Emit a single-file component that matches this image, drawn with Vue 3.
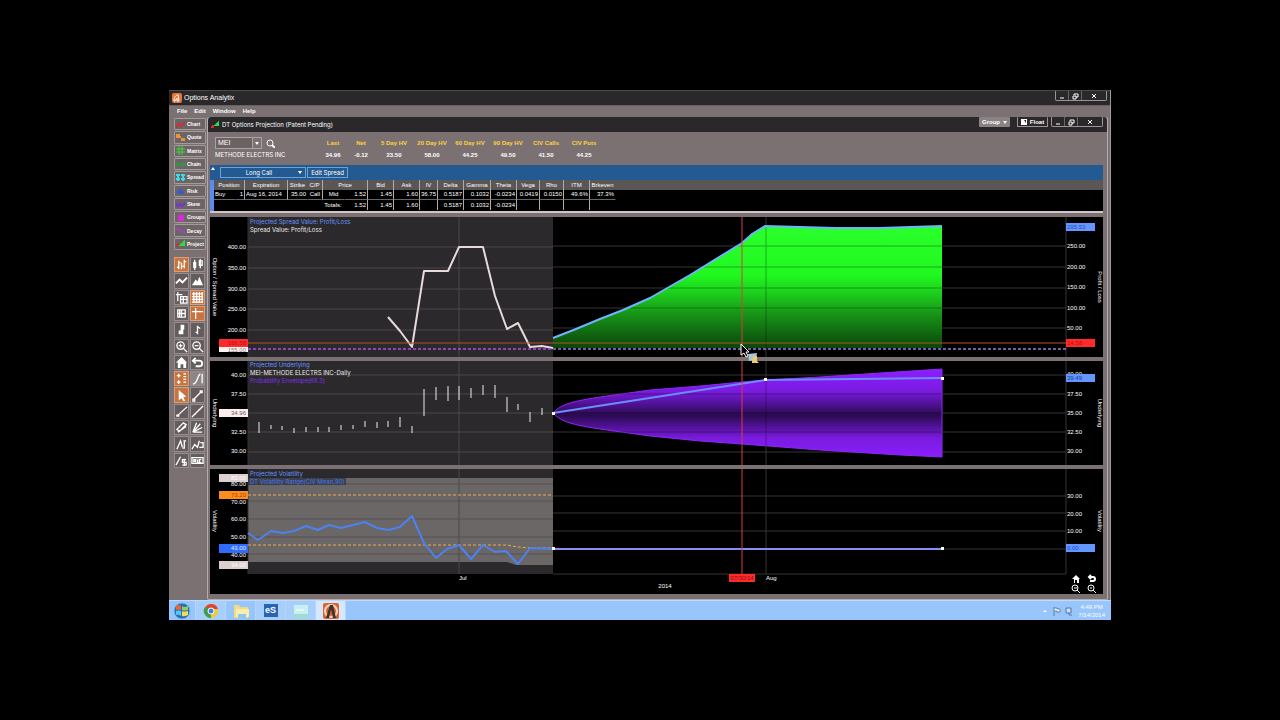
<script setup>
import { ref } from 'vue'

const symbol = ref('MEI')
const strategy = ref('Long Call')

const menus = ['File', 'Edit', 'Window', 'Help']

const launchers = [
  { name: 'Chart', color: '#c8323c', d: 'M1 7L4 4L6 6L10 2' },
  { name: 'Quote', color: '#e8963c', d: 'M2 2H4V4H2ZM4 4H6M7 6H9V7H7Z' },
  { name: 'Matrix', color: '#3cdc3c', thin: true, d: 'M1 3H10M1 6H10M4 0V9M7 0V9' },
  { name: 'Chain', color: '#28a03c', thin: true, d: 'M1 3H4V6H1ZM7 3H10V6H7ZM4 5H7' },
  { name: 'Spread', color: '#3cdce6', d: 'M1 2H5M6 2H10M1 6H5M6 6H10M3 1V8M8 1V8' },
  { name: 'Risk', color: '#325ad2', d: 'M2 6H9M4 4H7M3 7H8' },
  { name: 'Skew', color: '#7832d2', d: 'M1 4L3 7L5 5L7 7L10 4' },
  { name: 'Groups', color: '#dc28dc', d: 'M3 3H9M3 5H9M3 7H9' },
  { name: 'Decay', color: '#a046be', d: 'M1 3C5 3 6 5 10 7' },
  { name: 'Project', color: '#dc2832', d: 'M1 7L4 5', color2: '#32dc3c', d2: 'M6 6L9 3V6Z' },
]

const tools = [
  { name: 'Bar chart', on: true, d: 'M4 3V12M2 10H4M4 5H6M10 2V11M8 9H10M10 4H12M7 5V12' },
  { name: 'Candles', d: 'M4 2V13M3 5H5V10H3ZM10 1V11M9 3H12V8H9Z' },
  { name: 'Line chart', thick: true, d: 'M1 10L5 6L8 9L13 4' },
  { name: 'Area chart', fill: 'M1 12L5 6L7 8L9 3L13 12Z' },
  { name: 'Grid table', d: 'M1 4H8M3 1V11M6 6H13V13H6ZM6 9H13M9 6V13' },
  { name: 'Grid', on: true, d: 'M1 3H13M1 6H13M1 9H13M1 12H13M3 1V13M6 1V13M9 1V13M12 1V13' },
  { name: 'Data window', d: 'M3 3H11V11H3ZM3 7H11M7 3V11M5 3V11' },
  { name: 'Crosshair', on: true, d: 'M1 5H13M5 1V13' },
  { name: 'Widen bars', fill: 'M6 2H10V7H9V12H4V8H6Z' },
  { name: 'Narrow bars', d: 'M7 3V12M7 4L10 6M5 10H7' },
  { name: 'Zoom in', d: 'M10 6A4 4 0 1 1 2 6A4 4 0 1 1 10 6M9 9L13 13M4 6H8M6 4V8' },
  { name: 'Zoom out', d: 'M10 6A4 4 0 1 1 2 6A4 4 0 1 1 10 6M9 9L13 13M4 6H8' },
  { name: 'Home', fill: 'M7 1L13 7H12V13H9V9H6V13H3V7H1Z' },
  { name: 'Undo', d: 'M2 5H9A3 3 0 0 1 9 11H5M5 2L2 5L5 8', thick: true },
  { name: 'Levels', on: true, d: 'M2 4H6M4 2V6M2 11H6M4 9V13M9 2H12M9 5H12M9 8H12M9 11H12' },
  { name: 'Curve', pale: true, d: 'M2 13C8 12 6 4 10 2M12 2V12' },
  { name: 'Pointer', on: true, fill: 'M4 1L12 8L9 9L11 13L9 13L7 10L4 12Z' },
  { name: 'Segment', d: 'M3 11L11 3M2 11H4V13H2ZM10 2H12V4H10Z' },
  { name: 'Ray', d: 'M2 12L13 2M2 11H4V12H2Z' },
  { name: 'Line', d: 'M1 13L13 1M3 10H5M8 5H10' },
  { name: 'Channel', d: 'M2 9L9 2L12 4L5 11ZM3 12L12 6' },
  { name: 'Fan', d: 'M2 12L6 2M2 12L10 3M2 12L12 7M2 12H12' },
  { name: 'Wave', d: 'M2 12L6 3L8 10M9 3H12M10 3V11H8' },
  { name: 'Zigzag', d: 'M1 12L4 7L7 10L9 3M9 10H13V5H10' },
  { name: 'Price note', d: 'M1 12L6 3M12 6H8V9H12V12H8M10 5V13' },
  { name: 'Text', d: 'M1 4H13V10H1ZM3 9V6H5V9M3 8H5M7 6V9H8M11 6H9V9H11' },
]

const stats = [
  ['Last', '34.96'], ['Net', '-0.12'], ['5 Day HV', '23.50'], ['20 Day HV', '58.00'],
  ['60 Day HV', '44.25'], ['90 Day HV', '49.50'], ['CIV Calls', '41.50'], ['CIV Puts', '44.25'],
]

const legs = [
  ['1.52', '1.45', '1.60', '36.75', '0.5187', '0.1032', '-0.0234', '0.0419', '0.0150', '49.6%', '37.3%'],
  ['1.52', '1.45', '1.60', '', '0.5187', '0.1032', '-0.0234', '', '', '', ''],
]
const greeks = ['Bid', 'Ask', 'IV', 'Delta', 'Gamma', 'Theta', 'Vega', 'Rho', 'ITM', 'Brkeven']

const gridLeft = [247, 268, 289, 309, 330, 375, 394, 413, 432, 452]
const gridRight = [246, 267, 288, 308, 328, 375, 394, 413, 432, 452, 496, 513, 531, 549, 574]
const gridVol = [484, 501, 519, 537, 554]

const leftLabels = [
  ['400.00', 247], ['350.00', 268], ['300.00', 289], ['250.00', 309], ['200.00', 330],
  ['40.00', 375], ['37.50', 394], ['32.50', 432], ['30.00', 451],
  ['80.00', 484], ['70.00', 502], ['60.00', 519], ['50.00', 537], ['40.00', 555],
]
const rightLabels = [
  ['250.00', 246], ['200.00', 267], ['150.00', 287], ['100.00', 308], ['50.00', 328],
  ['40.00', 374], ['37.50', 394], ['35.00', 413], ['32.50', 432], ['30.00', 451],
  ['30.00', 496], ['20.00', 514], ['10.00', 531],
]
const leftTags = [
  { y: 347, h: 5, bg: '#fff4f4', fg: '#8a7a7a', t: '155.00' },
  { y: 339, h: 8, bg: '#ff2a2a', fg: '#a81414', t: '166.58' },
  { y: 409, h: 8, bg: '#fdeeee', fg: '#6a5a5a', t: '34.96' },
  { y: 474, h: 8, bg: '#dccfcf', fg: '#ffffff', t: '83.00' },
  { y: 491, h: 8, bg: '#ff8c1e', fg: '#9a4a00', t: '73.20' },
  { y: 544, h: 9, bg: '#2f6bff', fg: '#e6eeff', t: '43.00' },
  { y: 561, h: 8, bg: '#dccfcf', fg: '#ffffff', t: '34.00' },
]
const rightTags = [
  { y: 223, bg: '#6496ff', fg: '#2850b4', t: '295.53' },
  { y: 339, bg: '#ff2a2a', fg: '#a81414', t: '14.58' },
  { y: 374, bg: '#6496ff', fg: '#143c96', t: '39.49' },
  { y: 544, bg: '#6496ff', fg: '#1e46dc', t: '0.00' },
]
const axisTitles = [
  ['Option / Spread Value', 214, 287], ['Underlying', 214, 413], ['Volatility', 214, 521],
  ['Profit / Loss', 1099, 287], ['Underlying', 1099, 413], ['Volatility', 1099, 521],
]
const bars = [
  [259, 422, 433], [271, 425, 429], [282, 426, 430], [294, 428, 433], [306, 427, 432],
  [318, 427, 432], [329, 427, 432], [341, 425, 430], [353, 425, 429], [365, 421, 427],
  [377, 422, 428], [388, 421, 427], [400, 417, 427], [412, 426, 433], [424, 389, 416],
  [436, 387, 400], [448, 386, 401], [459, 386, 400], [471, 388, 398], [483, 385, 395],
  [495, 385, 398], [507, 397, 412], [518, 404, 410], [530, 412, 422], [542, 408, 415],
]
</script>

<template>
  <main class="desktop">
    <section class="app">
      <header class="titlebar">
        <svg class="logo" viewBox="0 0 10 10">
          <rect width="10" height="10" rx="2" fill="#e8743c" />
          <path d="M2 8C2 4 4 2 6 2L7 8H5V5L3 8Z" fill="none" stroke="#fff" />
        </svg>
        <h1>Options Analytix</h1>
        <div class="winctl outer">
          <button aria-label="Minimize"><svg viewBox="0 0 8 8"><path d="M2 6H6" /></svg></button>
          <button aria-label="Restore"><svg viewBox="0 0 8 8"><path d="M3 3V2H7V5H5M2 4H5V7H2Z" /></svg></button>
          <button aria-label="Close" class="wide"><svg viewBox="0 0 8 8"><path d="M2 2L6 6M6 2L2 6" /></svg></button>
        </div>
      </header>
      <nav class="menu"><button v-for="m in menus" :key="m">{{ m }}</button></nav>

      <div class="work">
        <aside class="side">
          <div class="launch">
            <button v-for="l in launchers" :key="l.name">
              <svg viewBox="0 0 11 9" :class="{ thin: l.thin }">
                <path :d="l.d" :stroke="l.color" />
                <path v-if="l.d2" :d="l.d2" :stroke="l.color2" />
              </svg>
              <span>{{ l.name }}</span>
            </button>
          </div>
          <div class="tools">
            <button v-for="t in tools" :key="t.name" :aria-label="t.name" :class="{ on: t.on, pale: t.pale, thick: t.thick }">
              <svg viewBox="0 0 14 14">
                <path v-if="t.d" :d="t.d" />
                <path v-if="t.fill" class="solid" :d="t.fill" />
              </svg>
            </button>
          </div>
        </aside>

        <section class="doc">
          <header class="doctitle">
            <svg class="mark" viewBox="0 0 10 8"><path d="M1 6H3V4" stroke="#e02832" /><path d="M6 4L8 2V4Z" stroke="#32dc3c" /></svg>
            <h2>DT Options Projection (Patent Pending)</h2>
            <button class="group">Group <i></i></button>
            <button class="float">
              <svg viewBox="0 0 6 6"><path d="M0 0H6V6H0Z" fill="#fff" /><path d="M3 1H5V4Z" fill="#222" /></svg>
              Float
            </button>
            <div class="winctl">
              <button aria-label="Minimize"><svg viewBox="0 0 8 8"><path d="M2 6H6" /></svg></button>
              <button aria-label="Restore"><svg viewBox="0 0 8 8"><path d="M3 3V2H7V5H5M2 4H5V7H2Z" /></svg></button>
              <button aria-label="Close" class="wide"><svg viewBox="0 0 8 8"><path d="M2 2L6 6M6 2L2 6" /></svg></button>
            </div>
          </header>

          <div class="quote">
            <div class="sym">
              <div class="symrow">
                <input v-model="symbol" aria-label="Symbol" />
                <button class="drop" aria-label="Symbol list"><i></i></button>
                <button class="find" aria-label="Find symbol">
                  <svg viewBox="0 0 9 9"><circle cx="4" cy="4" r="3" /><path d="M6 6L9 9" stroke-width="2" /></svg>
                </button>
              </div>
              <p>METHODE ELECTRS INC</p>
            </div>
            <dl class="stats">
              <div v-for="s in stats" :key="s[0]"><dt>{{ s[0] }}</dt><dd>{{ s[1] }}</dd></div>
            </dl>
          </div>

          <div class="strategy">
            <i class="up"></i>
            <div class="pick">
              <select v-model="strategy" aria-label="Strategy"><option>Long Call</option></select>
              <i></i>
            </div>
            <button class="edit">Edit Spread</button>
          </div>

          <div class="legs">
            <table>
              <colgroup>
                <col class="w22" /><col class="w9" /><col class="w43" /><col class="w20" /><col class="w14" />
                <col class="w23" /><col class="w23" /><col class="w26" /><col class="w26" /><col class="w18" />
                <col class="w26" /><col class="w27" /><col class="w26" /><col class="w23" /><col class="w24" />
                <col class="w26" /><col class="w26" />
              </colgroup>
              <thead>
                <tr>
                  <th colspan="2">Position</th><th>Expiration</th><th class="nb">Strike</th><th class="nb">C/P</th>
                  <th colspan="2" class="lb">Price</th><th v-for="g in greeks" :key="g">{{ g }}</th>
                </tr>
              </thead>
              <tbody>
                <tr class="leg">
                  <td class="nb txt">Buy</td><td>1</td><td class="txt">Aug 16, 2014</td><td class="nb">35.00</td><td class="nb">Call</td>
                  <td class="lb mid">Mid</td><td v-for="(v, i) in legs[0]" :key="i" :class="{ nb: i === 10 }">{{ v }}</td>
                </tr>
                <tr>
                  <td class="nb" colspan="5"></td>
                  <td class="mid">Totals:</td><td v-for="(v, i) in legs[1]" :key="i" :class="{ nb: i === 10 }">{{ v }}</td>
                </tr>
              </tbody>
            </table>
          </div>
          <div class="splitter"></div>

          <svg class="chart" viewBox="210 217 893 377" role="img" aria-label="Options projection charts">
            <defs>
              <linearGradient id="profit" gradientUnits="userSpaceOnUse" x1="0" y1="226" x2="0" y2="348">
                <stop offset="0" stop-color="#2cff2c" /><stop offset="0.4" stop-color="#20f820" />
                <stop offset="0.55" stop-color="#1ccf1c" /><stop offset="0.75" stop-color="#168c16" /><stop offset="1" stop-color="#0a460a" />
              </linearGradient>
              <linearGradient id="envelope" gradientUnits="userSpaceOnUse" x1="0" y1="369" x2="0" y2="458">
                <stop offset="0" stop-color="#8c1eff" /><stop offset="0.25" stop-color="#7a1be0" /><stop offset="0.52" stop-color="#2a0a50" />
                <stop offset="0.78" stop-color="#7a1be0" /><stop offset="1" stop-color="#8c1eff" />
              </linearGradient>
            </defs>
            <rect x="210" y="217" width="893" height="377" fill="#000" />
            <rect x="248" y="217" width="305" height="357" fill="#2b292b" />
            <path d="M248 478H553V565H516L507 562H248Z" fill="#6b6766" />

            <g stroke="#4b494b">
              <path v-for="y in gridLeft" :key="'l' + y" :d="`M248 ${y}H553`" />
              <path d="M459 217V574" />
            </g>
            <g stroke="#575354"><path v-for="y in gridVol" :key="'v' + y" :d="`M248 ${y}H553`" /></g>
            <g stroke="#343434">
              <path v-for="y in gridRight" :key="'r' + y" :d="`M553 ${y}H1066`" />
              <path d="M766 217V574M1066 217V574M248 217V574" />
            </g>

            <path d="M553 338L576 329L600 319L623 310L650 298L690 275L742 243L752 234L765 226L800 227L835 228L880 228L942 226V348H553Z" fill="url(#profit)" />
            <path d="M553 413C560 406 566 402 600 397L650 390L700 386L742 382L765 380L820 377L880 373L942 369V457L900 455L820 450L742 444L700 441L650 436L600 429C566 424 560 420 553 413Z" fill="url(#envelope)" stroke="#8c28f0" />
            <g stroke="#000" opacity="0.3">
              <path d="M738 246H942M703 267H942M668 288H942M630 308H942M766 226V348M620 394H942M553 413H942M620 432H942M766 380V446" />
            </g>
            <path d="M553 338L576 329L600 319L623 310L650 298L690 275L742 243L752 234L765 226L800 227L835 228L880 228L942 226" class="ln" stroke="#6eb4ff" stroke-width="2" />
            <path d="M388 317L400 331L412 347L424 271H448L459 247H483L495 296L507 329L518 323L530 347L542 346L553 348" class="ln" stroke="#e6dada" stroke-width="2" />
            <path d="M248 343H1066" stroke="#b4502a" />
            <path d="M248 349H553" stroke="#a050dc" stroke-width="2" stroke-dasharray="3 2" opacity="0.8" />
            <path d="M553 349H1066" stroke="#8c78c8" stroke-dasharray="3 2" stroke-width="2" opacity="0.8" />

            <path v-for="b in bars" :key="b[0]" :d="`M${b[0]} ${b[1]}V${b[2]}`" stroke="#f0ecec" />
            <path d="M553 413L765 380L942 378" class="ln" stroke="#6c8cff" stroke-width="2" />

            <path d="M248 495H553M248 545H507L518 547L530 548H553" class="ln" stroke="#f0aa50" stroke-dasharray="3 2" />
            <path d="M248 533L258 540L271 531L283 533L294 531L306 526L318 530L329 525L341 528L353 525L365 522L377 528L388 530L400 527L412 516L424 543L436 558L447 549L459 545L471 559L483 545L495 552L506 551L518 564L530 548L553 549" class="ln" stroke="#4b82f0" stroke-width="2" />
            <path d="M553 549H942" stroke="#888cf8" stroke-width="2" />

            <path d="M742 217V574" stroke="#dc3c3c" stroke-width="2" opacity="0.5" />
            <g fill="#fff">
              <rect x="552" y="412" width="3" height="3" /><rect x="764" y="378" width="3" height="3" />
              <rect x="941" y="377" width="3" height="3" /><rect x="552" y="547" width="3" height="3" /><rect x="941" y="547" width="3" height="3" />
            </g>
            <path d="M210 357H1103V361H210ZM210 465H1103V469H210Z" fill="#7b7172" />

            <g class="lab">
              <text v-for="(l, i) in leftLabels" :key="'ll' + i" x="246" :y="l[1] + 2" text-anchor="end">{{ l[0] }}</text>
              <text v-for="(l, i) in rightLabels" :key="'rl' + i" x="1067" :y="l[1] + 2">{{ l[0] }}</text>
              <text v-for="(a, i) in axisTitles" :key="'at' + i" text-anchor="middle" y="1" :transform="`translate(${a[1]} ${a[2]}) rotate(90)`">{{ a[0] }}</text>
              <g v-for="t in leftTags" :key="'lt' + t.y">
                <rect x="219" :y="t.y" width="29" :height="t.h" :fill="t.bg" />
                <text x="246" :y="t.h < 8 ? t.y + 5 : t.y + 6" text-anchor="end" :fill="t.fg">{{ t.t }}</text>
              </g>
              <g v-for="t in rightTags" :key="'rt' + t.y">
                <rect x="1066" :y="t.y" width="29" height="8" :fill="t.bg" />
                <text x="1067" :y="t.y + 6" :fill="t.fg">{{ t.t }}</text>
              </g>
              <rect x="729" y="574" width="26" height="8" fill="#ff2a2a" />
              <text x="742" y="580" text-anchor="middle" fill="#8a1010">07/30/14</text>
              <text x="459" y="580">Jul</text>
              <text x="766" y="580">Aug</text>
              <text x="665" y="588" text-anchor="middle">2014</text>
            </g>
            <rect x="248" y="478" width="98" height="7" fill="#2b3240" opacity="0.7" />
            <g class="cap">
              <text x="250" y="224" fill="#6496ff">Projected Spread Value: Profit/Loss</text>
              <text x="250" y="232" fill="#f0e8e8">Spread Value: Profit/Loss</text>
              <text x="250" y="367" fill="#6496ff">Projected Underlying</text>
              <text x="250" y="375" fill="#f0e8e8">MEI-METHODE ELECTRS INC-Daily</text>
              <text x="250" y="383" fill="#8232e6">Probability Envelope(68.3)</text>
              <text x="250" y="476" fill="#6496ff">Projected Volatility</text>
              <text x="250" y="484" fill="#4678f0">DT Volatility Range(CIV Mean,90)</text>
            </g>

            <g fill="none" stroke="#fff">
              <path d="M1072 579L1076 575L1080 579H1079V583H1077V580H1075V583H1074V579Z" fill="#fff" stroke="none" />
              <path d="M1089 577H1093A2 2 0 0 1 1093 581H1090M1091 575L1089 577L1091 579" stroke-width="2" />
              <circle cx="1075" cy="588" r="3" /><path d="M1077 590L1080 593M1074 588H1077" stroke-width="1" />
              <circle cx="1091" cy="588" r="3" /><path d="M1093 590L1096 593M1090 588H1092" />
            </g>
            <g>
              <path d="M741 344V355L744 353L746 357L748 356L746 352L749 352Z" fill="#000" stroke="#fff" />
              <path d="M748 354L757 353L756 360L749 361Z" fill="#a8c8d8" />
              <path d="M752 363V361L754 356H757V361L759 363Z" fill="#f0cc6e" />
            </g>
          </svg>
        </section>
      </div>
    </section>

    <footer class="taskbar">
      <button aria-label="Start" class="start">
        <svg viewBox="0 0 18 18">
          <circle cx="9" cy="9" r="8" fill="#2a6cb8" /><circle cx="9" cy="9" r="8" fill="none" stroke="#7ab8e8" />
          <path d="M3 4Q6 2 8 4V8Q6 7 3 8Z" fill="#f0643c" /><path d="M9 4Q11 6 15 4V8Q11 9 9 8Z" fill="#8cd25a" />
          <path d="M3 9Q6 8 8 9V14Q6 12 3 13Z" fill="#5ac8fa" /><path d="M9 9Q11 10 15 9V13Q11 15 9 14Z" fill="#fadc50" />
        </svg>
      </button>
      <button aria-label="Chrome" class="lit">
        <svg viewBox="0 0 18 18">
          <circle cx="9" cy="9" r="7" fill="#f0c83c" /><path d="M9 9L3 6A7 7 0 0 1 16 7H9Z" fill="#dc4632" />
          <path d="M9 9L9 16A7 7 0 0 1 3 5Z" fill="#3ca050" /><circle cx="9" cy="9" r="3" fill="#3c82e6" stroke="#fff" />
        </svg>
      </button>
      <button aria-label="Explorer">
        <svg viewBox="0 0 18 18"><path d="M2 3H7L8 5H16V16H2Z" fill="#f0dc82" /><path d="M4 7H17V15H4Z" fill="#faeeaa" /><path d="M6 12H14V16H6Z" fill="#8cc8f0" /></svg>
      </button>
      <button aria-label="eSignal" class="lit">
        <span class="es">eS</span>
      </button>
      <button aria-label="Notes" class="lit">
        <svg viewBox="0 0 18 18"><path d="M2 3H16V16H2Z" fill="#c8f0f0" /><path d="M2 12H16V16H2Z" fill="#a0dcd2" /><path d="M4 8H12" stroke="#fff" /></svg>
      </button>
      <button aria-label="Options Analytix" class="active">
        <svg viewBox="0 0 18 18">
          <rect x="1" y="1" width="16" height="16" rx="2" fill="#dc6432" /><circle cx="9" cy="9" r="6" fill="none" stroke="#f8d8c0" stroke-width="2" />
          <path d="M4 16L8 3H11L14 16H11L9 7L7 16Z" fill="#3c3230" />
        </svg>
      </button>
      <div class="tray">
        <svg viewBox="0 0 30 12">
          <path d="M1 7L3 5L5 7Z" fill="#fff" /><path d="M12 2V11M12 3H15V4H18V7H15V6H12" fill="#fff" stroke="#5a82a8" />
          <path d="M24 3H29V8H24ZM27 8V10H30" fill="#c8e0f8" stroke="#5078a0" />
        </svg>
        <p>4:49 PM<br />7/14/2014</p>
      </div>
    </footer>
  </main>
</template>

<style>
html, body { background: #000; }
</style>

<style scoped>
* { box-sizing: border-box; margin: 0; padding: 0; }
.desktop {
  min-height: 100vh;
  padding: 90px 169px 0;
  background: #000;
  color: #fff;
  font: 6px/8px "Liberation Sans", Arial, sans-serif;
}
button, input, select { font: inherit; color: inherit; background: none; border: 0; border-radius: 0; outline: 0; }
svg { display: block; }
h1, h2 { font-size: 7px; line-height: 10px; font-weight: 400; }
h2 { font-family: Inter, "Liberation Sans", sans-serif; font-size: 6px; }
.app { background: #7b7172; border-right: 1px solid #a09a9a; }
.titlebar { display: flex; align-items: center; height: 15px; background: #2a282a; border-top: 1px solid #4a4a4a; padding: 0 3px; gap: 2px; }
.logo { width: 10px; height: 10px; }
.winctl { display: flex; align-self: flex-start; height: 10px; border: 1px solid #9a9494; border-top: 0; border-radius: 0 0 2px 2px; }
.outer { margin-left: auto; }
.winctl button { width: 13px; border-right: 1px solid #6a6464; display: grid; place-items: center; }
.winctl .wide { width: 24px; border-right: 0; }
.winctl svg { width: 8px; height: 8px; fill: none; stroke: #fff; }
.menu { display: flex; gap: 7px; height: 12px; padding: 0 0 2px 8px; font-weight: 700; border-top: 1px solid #686061; }
.work { display: flex; height: 483px; }
.side { width: 38px; flex: none; padding: 1px 0 0 5px; }
.launch { display: grid; grid-auto-rows: 1fr; height: 132px; row-gap: 1px; }
.launch button { display: flex; align-items: center; gap: 1px; border: 1px solid #a49c9c; border-radius: 1px; width: 32px; background: #6c6465; font-size: 5px; font-weight: 700; line-height: 6px; }
.launch svg { width: 11px; height: 9px; flex: none; fill: none; stroke-width: 2; }
.launch .thin { stroke-width: 1; }
.tools { display: grid; grid-template-columns: 15px 15px; gap: 1px; grid-auto-rows: 1fr; height: 211px; margin-top: 7px; }
.tools button { display: grid; place-items: center; border: 1px solid #968e8e; background: #645c5d; }
.tools svg { width: 13px; height: 13px; fill: none; stroke: #fff; stroke-width: 1.4; }
.tools .solid { fill: #fff; stroke: none; }
.tools .on { background: #c87440; border-color: #dca078; }
.tools .pale { background: #8c8687; }
.tools .thick svg { stroke-width: 2; }
.doc { flex: 1; min-width: 0; margin-right: 2px; border: 1px solid #b4acac; border-top: 0; border-radius: 2px; padding: 0 4px 4px 2px; display: flex; flex-direction: column; }
.doctitle { display: flex; align-items: flex-start; height: 15px; background: #2a282a; margin: 0 -4px 0 -2px; padding-right: 4px; border-radius: 4px 4px 0 0; }
.doctitle h2 { flex: 1; padding-top: 3px; }
.mark { width: 10px; height: 8px; margin: 4px 2px 0; fill: none; stroke-width: 2; }
.group, .float { display: flex; align-items: center; justify-content: center; gap: 3px; width: 31px; height: 10px; font-weight: 700; border-radius: 1px; }
.group { background: #8a8283; margin-right: 7px; }
.float { border: 1px solid #9a9494; border-top: 0; margin-right: 3px; }
.float svg { width: 6px; height: 6px; }
i { width: 0; height: 0; border: 2px solid transparent; border-top: 3px solid #fff; border-bottom: 0; }
.quote { display: flex; height: 33px; padding: 5px 0 0 5px; }
.sym { width: 104px; }
.symrow { display: flex; height: 12px; }
.symrow input { width: 38px; border: 1px solid #aaa2a3; background: #6a6263; padding-left: 2px; font-size: 7px; }
.drop { width: 9px; border: 1px solid #aaa2a3; border-left: 0; display: grid; place-items: center; }
.find { margin-left: 4px; }
.find svg { width: 9px; height: 9px; fill: none; stroke: #fff; }
.sym p { padding-top: 2px; white-space: nowrap; font-family: Inter, "Liberation Sans", sans-serif; }
.stats { display: grid; grid-template-columns: 28px 28px repeat(6, 38px); text-align: center; font-weight: 700; }
.stats dt { color: #ffd23c; padding-top: 2px; line-height: 8px; }
.stats dd { padding-top: 4px; }
.strategy { display: flex; height: 15px; background: #235a91; padding: 2px 0; gap: 1px; }
.up { border: 2px solid transparent; border-top: 0; border-bottom: 3px solid #fff; margin: 0 4px 0 1px; }
.pick { position: relative; }
.pick select { appearance: none; width: 86px; height: 11px; border: 1px solid #6ea0d2; text-align-last: center; padding-right: 8px; }
.pick select, .edit { font-family: Inter, "Liberation Sans", sans-serif; }
.pick select option { background: #235a91; }
.pick i { position: absolute; right: 4px; top: 4px; pointer-events: none; }
.edit { border: 1px solid #6ea0d2; width: 41px; }
.legs { height: 31px; background: linear-gradient(#5a5655 10px, #000 10px); border-left: 4px solid #5a8cf0; }
table { border-collapse: separate; border-spacing: 0; table-layout: fixed; width: 402px; }
th, td { height: 10px; font-weight: 400; line-height: 9px; border-right: 1px solid #b0aaaa; padding: 0 1px; text-align: right; white-space: nowrap; }
th { text-align: center; padding: 1px 0 0; }
th:last-child, .nb { border-right-color: transparent; }
.lb { border-left: 1px solid #b0aaaa; }
.txt { text-align: left; }
.mid { text-align: center; border-right-color: transparent; padding: 0; }
.leg td { border-bottom: 1px solid #6a6666; }
.w9 { width: 9px; } .w14 { width: 14px; } .w18 { width: 18px; } .w20 { width: 20px; } .w22 { width: 22px; }
.w23 { width: 23px; } .w24 { width: 24px; } .w26 { width: 26px; } .w27 { width: 27px; } .w43 { width: 43px; }
.splitter { height: 6px; border-top: 2px solid #d0c4c6; }
.chart { width: 100%; height: auto; }
.chart .ln { fill: none; stroke-linejoin: round; }
.lab { fill: #fff; font-size: 6px; }
.cap { font: 6px Inter, "Liberation Sans", sans-serif; }
.taskbar { display: flex; height: 20px; background: #98c6fc; border-top: 1px solid #bcdcff; }
.taskbar button { width: 30px; display: grid; place-items: center; border-right: 1px solid #b4d6fc; }
.taskbar .start { width: 27px; }
.taskbar svg { width: 18px; height: 18px; }
.taskbar .lit { background: #a8cefa; }
.taskbar .active { background: #d6e8fc; }
.es { width: 14px; height: 13px; background: #2864b4; color: #fff; font: 700 9px/12px "Liberation Sans", Arial, sans-serif; }
.tray { margin-left: auto; display: flex; align-items: center; gap: 6px; text-align: center; padding-right: 6px; }
.taskbar .tray svg { width: 30px; height: 12px; }
</style>
